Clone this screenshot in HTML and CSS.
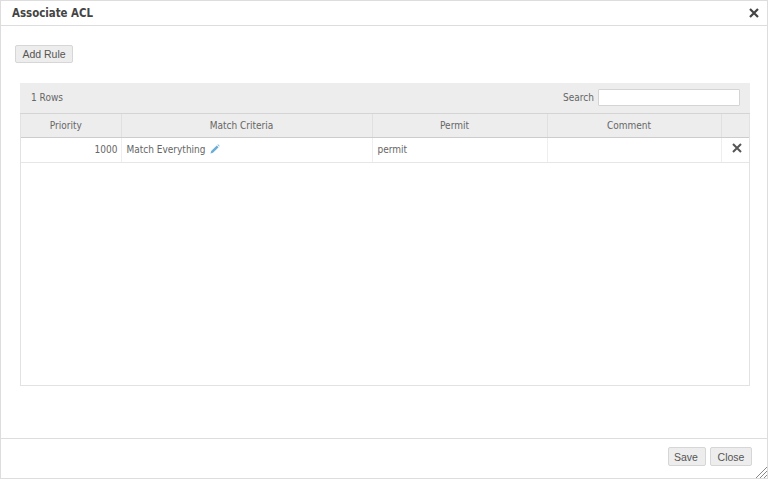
FILE: index.html
```html
<!DOCTYPE html>
<html lang="en">
<head>
<meta charset="utf-8">
<title>Associate ACL</title>
<link rel="stylesheet" href="styles.css">
</head>
<body>
<div class="dialog">
  <header class="titlebar">
    <h1 class="title">Associate ACL</h1>
    <svg class="close-x" width="10" height="10" viewBox="0 0 10 10"><path d="M1 1 9 9M9 1 1 9" stroke="#444" stroke-width="2.2" fill="none"/></svg>
  </header>
  <main class="content">
    <button class="btn add-rule">Add Rule</button>
    <section class="panel">
      <div class="toolbar">
        <span class="rows">1 Rows</span>
        <label class="search">Search <input class="search-input" type="text"></label>
      </div>
      <table class="grid">
        <colgroup>
          <col class="c1"><col class="c2"><col class="c3"><col class="c4"><col class="c5">
        </colgroup>
        <thead>
          <tr><th>Priority</th><th>Match Criteria</th><th>Permit</th><th>Comment</th><th></th></tr>
        </thead>
        <tbody>
          <tr>
            <td class="num">1000</td>
            <td>Match Everything <svg class="pencil" width="10" height="10" viewBox="0 0 10 10"><path d="M0.5 9.5 1.2 7 6.8 1.4 8.6 3.2 3 8.8Z M7.4 0.8 8 0.3 9.7 2 9.2 2.6Z" fill="#6aaed6"/></svg></td>
            <td>permit</td>
            <td></td>
            <td class="action"><svg width="10" height="10" viewBox="0 0 10 10"><path d="M1 1 9 9M9 1 1 9" stroke="#555" stroke-width="2" fill="none"/></svg></td>
          </tr>
        </tbody>
      </table>
    </section>
  </main>
  <footer class="footer">
    <button class="btn">Save</button>
    <button class="btn">Close</button>
    <svg class="grip" width="12" height="12" viewBox="0 0 12 12"><path d="M1 12 12 1M5 12 12 5M9 12 12 9" stroke="#888" stroke-width="1" fill="none"/></svg>
  </footer>
</div>
</body>
</html>
```
FILE: styles.css
```css
* { box-sizing: border-box; }
html, body { margin: 0; height: 100%; }
body { background: #fff; font-family: "DejaVu Sans", "Noto Sans", sans-serif; font-stretch: condensed; font-size: 10px; color: #666; }
.dialog { position: relative; display: flex; flex-direction: column; width: 768px; height: 479px; border: 1px solid #ddd; }
.titlebar { display: flex; align-items: center; justify-content: space-between; height: 25px; padding: 0 4px 0 11px; border-bottom: 1px solid #ddd; flex: none; }
.title { margin: 0; font-size: 11.4px; font-weight: 700; color: #444; }
.close-x { margin-right: 4px; }
.content { flex: 1; padding: 19px 17px 0 14px; }
.btn { height: 18px; padding: 0 6px; border: 1px solid #d6d6d6; border-radius: 2px; background: #ededed; font-family: "Liberation Sans", Arial, sans-serif; font-size: 10.5px; color: #555; }
.add-rule { display: block; width: 58px; }
.panel { display: flex; flex-direction: column; margin: 20px 0 0 5px; height: 303px; border: 1px solid #e2e2e2; border-top: 0; }
.toolbar { display: flex; align-items: center; justify-content: space-between; height: 31px; padding: 0 10px 2px 11px; background: #ededed; border-bottom: 1px solid #d4d4d4; margin: 0 -1px; }
.search { display: flex; align-items: center; gap: 4px; color: #666; }
.search-input { width: 142px; height: 17px; padding: 0; border: 1px solid #d4d4d4; border-radius: 1px; background: #fff; }
.grid { width: 728px; border-collapse: collapse; table-layout: fixed; }
.c1 { width: 100px; } .c2 { width: 251px; } .c3 { width: 175px; } .c4 { width: 174px; } .c5 { width: 28px; }
th { height: 23px; padding: 0 10px 0 0; background: #ededed; font-weight: 400; color: #666; text-align: center; border-right: 1px solid #e0e0e0; border-bottom: 1px solid #ccc; }
td { height: 25px; padding: 0 5px; border-right: 1px solid #eee; border-bottom: 1px solid #e6e6e6; color: #666; }
th:last-child, td:last-child { border-right: 0; }
.num { text-align: right; padding-right: 3px; }
.pencil { margin-left: 2px; vertical-align: -1px; }
.action { padding: 0 0 2px 3px; text-align: center; }
.footer { display: flex; align-items: center; justify-content: flex-end; gap: 4px; height: 40px; padding: 0 15px 4px 0; border-top: 1px solid #ddd; flex: none; }
.footer .btn { height: 19px; }
.footer .btn:first-of-type { width: 38px; padding: 0 7px 0 5px; }
.footer .btn:nth-of-type(2) { width: 42px; }
.grip { position: absolute; right: 0; bottom: 0; }
```
